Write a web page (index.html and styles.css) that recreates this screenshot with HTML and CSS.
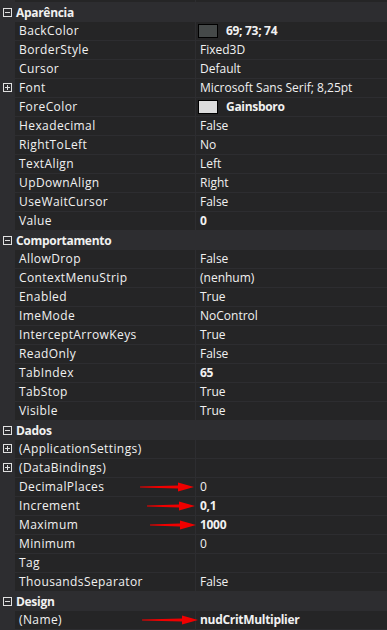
FILE: index.html
```html
<!DOCTYPE html>
<html lang="pt">
<head>
    <meta charset="UTF-8">
    <title>Propriedades</title>
    <link rel="stylesheet" href="styles.css">
</head>
<body>
    <div class="grid">
        <div class="row stub"><div class="gutter"></div><div class="name"></div><div class="value"></div></div>

        <div class="cat"><span class="box minus"></span>Aparência</div>
        <div class="row"><div class="gutter"></div><div class="name">BackColor</div><div class="value"><span class="swatch dark"></span><b>69; 73; 74</b></div></div>
        <div class="row"><div class="gutter"></div><div class="name">BorderStyle</div><div class="value">Fixed3D</div></div>
        <div class="row"><div class="gutter"></div><div class="name">Cursor</div><div class="value">Default</div></div>
        <div class="row"><div class="gutter"><span class="box plus"></span></div><div class="name">Font</div><div class="value">Microsoft Sans Serif; 8,25pt</div></div>
        <div class="row"><div class="gutter"></div><div class="name">ForeColor</div><div class="value"><span class="swatch light"></span><b>Gainsboro</b></div></div>
        <div class="row"><div class="gutter"></div><div class="name">Hexadecimal</div><div class="value">False</div></div>
        <div class="row"><div class="gutter"></div><div class="name">RightToLeft</div><div class="value">No</div></div>
        <div class="row"><div class="gutter"></div><div class="name">TextAlign</div><div class="value">Left</div></div>
        <div class="row"><div class="gutter"></div><div class="name">UpDownAlign</div><div class="value">Right</div></div>
        <div class="row"><div class="gutter"></div><div class="name">UseWaitCursor</div><div class="value">False</div></div>
        <div class="row"><div class="gutter"></div><div class="name">Value</div><div class="value"><b>0</b></div></div>

        <div class="cat"><span class="box minus"></span>Comportamento</div>
        <div class="row"><div class="gutter"></div><div class="name">AllowDrop</div><div class="value">False</div></div>
        <div class="row"><div class="gutter"></div><div class="name">ContextMenuStrip</div><div class="value">(nenhum)</div></div>
        <div class="row"><div class="gutter"></div><div class="name">Enabled</div><div class="value">True</div></div>
        <div class="row"><div class="gutter"></div><div class="name">ImeMode</div><div class="value">NoControl</div></div>
        <div class="row"><div class="gutter"></div><div class="name">InterceptArrowKeys</div><div class="value">True</div></div>
        <div class="row"><div class="gutter"></div><div class="name">ReadOnly</div><div class="value">False</div></div>
        <div class="row"><div class="gutter"></div><div class="name">TabIndex</div><div class="value"><b>65</b></div></div>
        <div class="row"><div class="gutter"></div><div class="name">TabStop</div><div class="value">True</div></div>
        <div class="row"><div class="gutter"></div><div class="name">Visible</div><div class="value">True</div></div>

        <div class="cat"><span class="box minus"></span>Dados</div>
        <div class="row"><div class="gutter"><span class="box plus"></span></div><div class="name">(ApplicationSettings)</div><div class="value"></div></div>
        <div class="row"><div class="gutter"><span class="box plus"></span></div><div class="name">(DataBindings)</div><div class="value"></div></div>
        <div class="row"><div class="gutter"></div><div class="name">DecimalPlaces<svg class="arrow" width="54" height="10" viewBox="0 0 54 10"><path d="M0 4.5 L38 3.5 L38 0.5 L54 5 L38 9.5 L38 6.5 L0 5.5 Z"/></svg></div><div class="value">0</div></div>
        <div class="row"><div class="gutter"></div><div class="name">Increment<svg class="arrow a2" width="48" height="10" viewBox="0 0 48 10"><path d="M0 4.5 L32 3.5 L32 0.5 L48 5 L32 9.5 L32 6.5 L0 5.5 Z"/></svg></div><div class="value"><b>0,1</b></div></div>
        <div class="row"><div class="gutter"></div><div class="name">Maximum<svg class="arrow a3" width="46" height="10" viewBox="0 0 46 10"><path d="M0 4.5 L30 3.5 L30 0.5 L46 5 L30 9.5 L30 6.5 L0 5.5 Z"/></svg></div><div class="value"><b>1000</b></div></div>
        <div class="row"><div class="gutter"></div><div class="name">Minimum</div><div class="value">0</div></div>
        <div class="row"><div class="gutter"></div><div class="name">Tag</div><div class="value"></div></div>
        <div class="row"><div class="gutter"></div><div class="name">ThousandsSeparator</div><div class="value">False</div></div>

        <div class="cat"><span class="box minus"></span>Design</div>
        <div class="row"><div class="gutter"></div><div class="name">(Name)<svg class="arrow a4" width="56" height="10" viewBox="0 0 56 10"><path d="M0 4.5 L40 3.5 L40 0.5 L56 5 L40 9.5 L40 6.5 L0 5.5 Z"/></svg></div><div class="value"><b>nudCritMultiplier</b></div></div>
    </div>
</body>
</html>
```

FILE: styles.css
```css
body {
    margin: 0;
    background-color: #252526;
    font-family: "Open Sans", "Noto Sans", sans-serif;
    font-size: 12px;
    color: #f1f1f1;
}
.grid {
    width: 387px;
    height: 630px;
    overflow: hidden;
}
.row {
    display: flex;
    height: 18px;
    border-bottom: 1px solid #2d2d30;
}
.row.stub {
    height: 2px;
}
.gutter {
    width: 15px;
    flex-shrink: 0;
    background-color: #2d2d30;
    position: relative;
}
.name {
    width: 181px;
    flex-shrink: 0;
    padding-left: 4px;
    box-sizing: border-box;
    line-height: 18px;
    white-space: nowrap;
    letter-spacing: 0.4px;
    border-right: 1px solid #2d2d30;
    position: relative;
}
.value {
    flex: 1;
    padding-left: 4px;
    line-height: 18px;
    white-space: nowrap;
    display: flex;
    align-items: center;
}
.value b {
    font-weight: bold;
    letter-spacing: -0.3px;
}
.cat {
    height: 19px;
    line-height: 19px;
    background-color: #2d2d30;
    font-weight: bold;
    letter-spacing: -0.3px;
    display: flex;
    align-items: center;
}
.box {
    width: 7px;
    height: 7px;
    border: 1px solid #e0e0e0;
    margin: 0 4px 0 3px;
    position: relative;
    flex-shrink: 0;
}
.gutter .box {
    position: absolute;
    left: 0;
    top: 4px;
    margin: 0 0 0 3px;
}
.box::before {
    content: "";
    position: absolute;
    left: 1px;
    top: 3px;
    width: 5px;
    height: 1px;
    background-color: #e0e0e0;
}
.box.plus::after {
    content: "";
    position: absolute;
    left: 3px;
    top: 1px;
    width: 1px;
    height: 5px;
    background-color: #e0e0e0;
}
.swatch {
    width: 18px;
    height: 12px;
    border: 1px solid #000;
    margin-right: 8px;
    margin-left: -2px;
}
.swatch.dark {
    background-color: #454949;
}
.swatch.light {
    background-color: #dcdcdc;
}
.arrow {
    position: absolute;
    top: 4px;
    left: 125px;
    fill: #f00000;
}
.arrow.a2 {
    left: 132px;
}
.arrow.a3 {
    left: 135px;
}
.arrow.a4 {
    left: 127px;
}
```
